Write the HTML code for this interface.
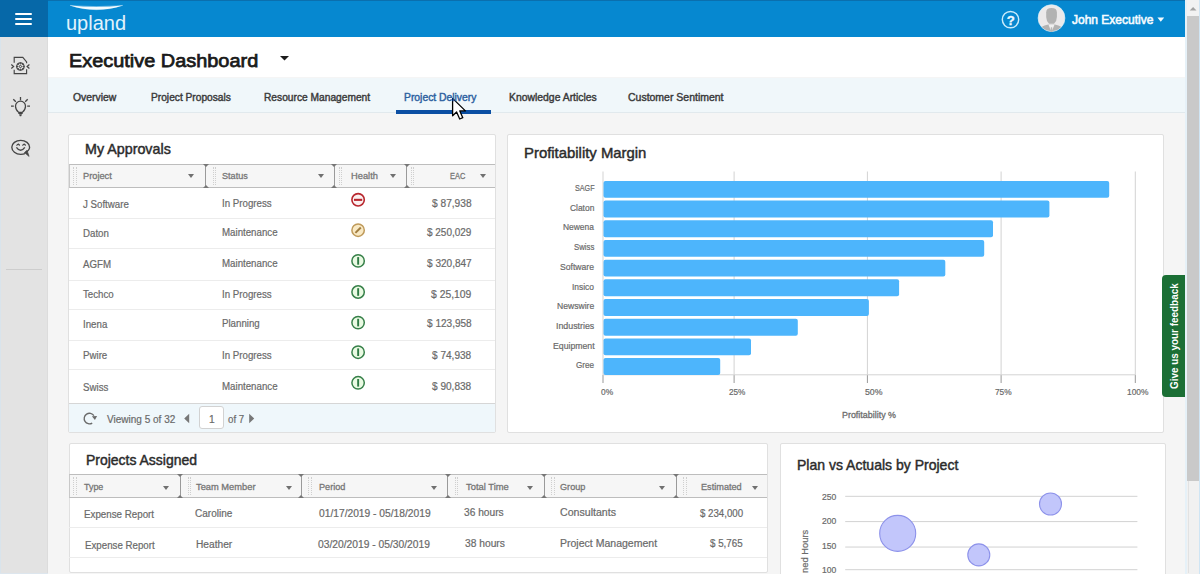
<!DOCTYPE html>
<html><head><meta charset="utf-8">
<style>
*{margin:0;padding:0;box-sizing:border-box}
html,body{width:1200px;height:574px;overflow:hidden;background:#f5f5f5;font-family:"Liberation Sans",sans-serif;color:#555;position:relative}
div{position:absolute}
.t{white-space:nowrap;line-height:1;transform-origin:0 0}
.card{background:#fff;border:1px solid #e0e0e0;border-radius:2px}
.th{background:#f6f6f6;border-top:1px solid #bdbdbd;border-bottom:1px solid #bdbdbd;border-left:1px solid #c8c8c8}
.sep{width:1px;background:#9a9a9a}
.sep:before,.sep:after{content:"";position:absolute;left:-2.5px;border-left:3px solid transparent;border-right:3px solid transparent}
.sep:before{top:0;border-top:3px solid #777}
.sep:after{bottom:0;border-bottom:3px solid #777}
.dh{width:3.6px;border-left:1px dotted #cfcfcf;border-right:1px dotted #cfcfcf}
.ar{width:0;height:0;border-left:3.8px solid transparent;border-right:3.8px solid transparent;border-top:4.4px solid #707070}
.rs{height:1px;background:#ececec}
</style></head><body>
<!-- header -->
<div style="left:0;top:0;width:1185px;height:37.8px;background:#0688d0"></div>
<div style="left:0;top:0;width:1185px;height:1px;background:#0a6fae"></div>
<div style="left:0;top:0;width:48px;height:37.8px;background:#0668a8"></div>
<div style="left:15px;top:13px;width:17px;height:2.3px;background:#fff;border-radius:1px"></div>
<div style="left:15px;top:17.8px;width:17px;height:2.3px;background:#fff;border-radius:1px"></div>
<div style="left:15px;top:22.6px;width:17px;height:2.3px;background:#fff;border-radius:1px"></div>
<svg style="position:absolute;left:0;top:0" width="1200" height="40">
 <path d="M70 5.4 Q96.4 7.9 122.8 5.4 Q96.4 14.1 70 5.4 Z" fill="#f2fafe" stroke="#f2fafe" stroke-width="0.25"/>
 <circle cx="1010.5" cy="19.6" r="8.2" fill="none" stroke="#c9ebfb" stroke-width="1.45"/>
 <text x="1010.7" y="24.7" font-family="Liberation Sans" font-size="13.2" font-weight="bold" fill="#eef9fe" text-anchor="middle" stroke="#eef9fe" stroke-width="0.3">?</text>
 <circle cx="1051.5" cy="18.1" r="13.4" fill="#ebe9ea" stroke="#d8f0fb" stroke-width="0.7"/>
 <clipPath id="av"><circle cx="1051.5" cy="18.1" r="13.1"/></clipPath>
 <g clip-path="url(#av)" fill="#b2b2b2">
  <path d="M1046.2 12.2 Q1046.2 7.9 1051.5 7.9 Q1056.9 7.9 1056.9 12.2 L1056.9 17 Q1056.9 21 1054 23.8 L1049.1 23.8 Q1046.2 21 1046.2 17 Z"/>
  <path d="M1039 35 L1042.3 26.6 Q1043.8 25.2 1048.3 24.4 L1054.7 24.4 Q1059.2 25.2 1060.7 26.6 L1064 35 Z"/>
 </g>
 <path d="M1048.4 24.6 L1051.5 32 L1054.6 24.6 Z" fill="#efefef"/>
 <path d="M1050.9 27.2 L1052.1 27.2 L1052.6 32 L1050.4 32 Z" fill="#b8b8b8"/>
 <path d="M1157.4 17.4 L1164.2 17.4 L1160.8 21.8 Z" fill="#f4fbff"/>
</svg>
<!-- sidebar -->
<div style="left:0;top:37px;width:48px;height:537px;background:#e3e3e3;border-right:1px solid #dcdcdc"></div>
<div style="left:6px;top:268.8px;width:36px;height:1px;background:#cdcdcd"></div>
<div style="left:0;top:37.8px;width:1px;height:537px;background:#d9e4ec"></div>
<div style="left:0;top:573px;width:48px;height:1px;background:#dde6ee"></div>
<svg style="position:absolute;left:0;top:37px" width="48" height="140" fill="none" stroke="#454545" stroke-width="1.15">
 <g transform="translate(0,0.3)">
 <path d="M14.2 25.5 L14.2 20 L22.8 20 L26.6 24.6 L26.6 26"/>
 <path d="M14.2 32.5 L14.2 36.3 L26.6 36.3 L26.6 32"/>
 <path d="M11.3 27.2 L13.6 29.2 L11.3 31.2 M29.4 27.2 L27.1 29.2 L29.4 31.2" stroke-width="1.2"/>
 <circle cx="20.4" cy="29.2" r="3.7" stroke-width="1.3"/>
 <circle cx="20.4" cy="29.2" r="1.1" stroke-width="1"/>
 <path d="M20.4 25.1 V27.1 M20.4 31.3 V33.3 M16.3 29.2 H18.3 M22.5 29.2 H24.5 M17.5 26.3 L18.9 27.7 M21.9 30.7 L23.3 32.1 M23.3 26.3 L21.9 27.7 M18.9 30.7 L17.5 32.1" stroke-width="0.9"/></g>
 <path d="M18.7 75.4 Q15.5 72.6 15.5 69.2 A5 5 0 0 1 25.5 69.2 Q25.5 72.6 22.3 75.4 Z" stroke-width="1.25"/>
 <path d="M18.3 76.4 H22.7 M19.2 77.9 H21.8 M20.5 77.5 V79.2" stroke-width="1.4"/>
 <path d="M20.5 60 V63.2 M13.3 62.2 L15.8 64.7 M27.7 62.2 L25.2 64.7 M11 69.2 H13.8 M27.2 69.2 H30" stroke-width="1.3"/>
 <path d="M25.6 115.6 Q29.6 113.2 29.6 110.3 A8.9 7 0 1 0 20.7 117.3 Q23.3 117.3 25 116.7" stroke-width="1.35"/>
 <path d="M24.4 115.6 L29.1 119.4 L27 113.4 Z" fill="#454545" stroke-width="0.7"/>
 <path d="M16.5 108.3 Q18.2 105.4 19.9 108.3 Q18.2 107.1 16.5 108.3 Z M22.4 108.3 Q24.1 105.4 25.8 108.3 Q24.1 107.1 22.4 108.3 Z" fill="#454545" stroke-width="0.8"/>
 <path d="M16.4 110.3 Q20.6 116.2 24.8 110.3" stroke-width="1.4"/>
</svg>
<!-- title bar + nav -->
<div style="left:48px;top:37px;width:1137px;height:40px;background:#fff"></div>
<div style="left:48px;top:77.6px;width:1137px;height:35.9px;background:#f0f7fa;border-bottom:1px solid #e1e9ed"></div>
<svg style="position:absolute;left:270px;top:50px" width="30" height="20"><path d="M10 6 L19 6 L14.5 10.4 Z" fill="#1c1c1c"/></svg>
<div style="left:395.7px;top:109.9px;width:95.7px;height:3.7px;background:#0c4fa3"></div>
<div class="card" style="left:68px;top:134px;width:428px;height:298.9px"></div>
<div class="th" style="left:69px;top:164px;width:426px;height:24px"></div>
<div class="sep" style="left:205.0px;top:164px;height:24px"></div>
<div class="sep" style="left:333.7px;top:164px;height:24px"></div>
<div class="sep" style="left:406.0px;top:164px;height:24px"></div>
<div class="dh" style="left:73.2px;top:167px;height:18px"></div>
<div class="dh" style="left:212.7px;top:167px;height:18px"></div>
<div class="dh" style="left:338.5px;top:167px;height:18px"></div>
<div class="dh" style="left:410.8px;top:167px;height:18px"></div>
<div class="ar" style="left:188.2px;top:174.3px"></div>
<div class="ar" style="left:317.5px;top:174.3px"></div>
<div class="ar" style="left:389.5px;top:174.3px"></div>
<div class="ar" style="left:479.9px;top:174.3px"></div>
<div class="rs" style="left:69px;top:217.9px;width:426px"></div>
<div class="rs" style="left:69px;top:247.5px;width:426px"></div>
<div class="rs" style="left:69px;top:280.4px;width:426px"></div>
<div class="rs" style="left:69px;top:308.5px;width:426px"></div>
<div class="rs" style="left:69px;top:339.7px;width:426px"></div>
<div class="rs" style="left:69px;top:368.9px;width:426px"></div>
<div style="left:69px;top:403px;width:426px;height:29.4px;background:#eff7fb;border-top:1px solid #d6d6d6"></div>
<div style="left:199.2px;top:406.3px;width:25px;height:23px;background:#fff;border:1px solid #d2d2d2;border-radius:3px"></div>
<svg style="position:absolute;left:0;top:0" width="1200" height="574">
<circle cx="358.1" cy="199.8" r="6.2" fill="#fbf0f0" stroke="#b8272e" stroke-width="1.6"/><rect x="354.0" y="198.8" width="8.2" height="2.1" fill="#b8272e"/>
<circle cx="358.1" cy="230.2" r="6.2" fill="#f9e9c4" stroke="#bf9a5a" stroke-width="1.5"/><path d="M355.40000000000003 232.89999999999998 L360.8 227.5" stroke="#a07d40" stroke-width="2"/>
<circle cx="358.1" cy="260.9" r="6.2" fill="#eafae3" stroke="#378049" stroke-width="1.5"/><rect x="357.20000000000005" y="257.09999999999997" width="1.9" height="7.6" fill="#2f7b45"/>
<circle cx="358.1" cy="292" r="6.2" fill="#eafae3" stroke="#378049" stroke-width="1.5"/><rect x="357.20000000000005" y="288.2" width="1.9" height="7.6" fill="#2f7b45"/>
<circle cx="358.1" cy="322.6" r="6.2" fill="#eafae3" stroke="#378049" stroke-width="1.5"/><rect x="357.20000000000005" y="318.8" width="1.9" height="7.6" fill="#2f7b45"/>
<circle cx="358.1" cy="352.2" r="6.2" fill="#eafae3" stroke="#378049" stroke-width="1.5"/><rect x="357.20000000000005" y="348.4" width="1.9" height="7.6" fill="#2f7b45"/>
<circle cx="358.1" cy="382.8" r="6.2" fill="#eafae3" stroke="#378049" stroke-width="1.5"/><rect x="357.20000000000005" y="379.0" width="1.9" height="7.6" fill="#2f7b45"/>
<path d="M92.2 423.1 A5.3 5.3 0 1 1 93.9 415.6" fill="none" stroke="#6a6a6a" stroke-width="1.35"/><path d="M91.9 416.3 L97.1 415.9 L94.9 420 Z" fill="#6a6a6a"/>
<path d="M189.2 413.8 L184.2 418.5 L189.2 423.3 Z" fill="#777"/><path d="M249.2 413.8 L254.2 418.5 L249.2 423.3 Z" fill="#777"/>
</svg>
<div class="card" style="left:506.9px;top:134px;width:657.1px;height:298.7px"></div>
<svg style="position:absolute;left:0;top:0" width="1200" height="574">
<rect x="602.5" y="171.5" width="1" height="203.5" fill="#d3d3d3"/>
<rect x="602.5" y="375" width="1" height="8" fill="#999"/>
<rect x="733.6" y="171.5" width="1" height="203.5" fill="#d3d3d3"/>
<rect x="733.6" y="375" width="1" height="8" fill="#999"/>
<rect x="866.9" y="171.5" width="1" height="203.5" fill="#d3d3d3"/>
<rect x="866.9" y="375" width="1" height="8" fill="#999"/>
<rect x="1000.6" y="171.5" width="1" height="203.5" fill="#d3d3d3"/>
<rect x="1000.6" y="375" width="1" height="8" fill="#999"/>
<rect x="1134.8" y="171.5" width="1" height="203.5" fill="#d3d3d3"/>
<rect x="1134.8" y="375" width="1" height="8" fill="#999"/>
<rect x="603" y="374.3" width="532.5" height="1" fill="#d3d3d3"/>
<rect x="603.5" y="180.90" width="505.7" height="16.9" rx="2" fill="#4db5fc"/>
<rect x="603.5" y="200.59" width="445.9" height="16.9" rx="2" fill="#4db5fc"/>
<rect x="603.5" y="220.28" width="389.5" height="16.9" rx="2" fill="#4db5fc"/>
<rect x="603.5" y="239.97" width="380.7" height="16.9" rx="2" fill="#4db5fc"/>
<rect x="603.5" y="259.66" width="341.8" height="16.9" rx="2" fill="#4db5fc"/>
<rect x="603.5" y="279.35" width="295.6" height="16.9" rx="2" fill="#4db5fc"/>
<rect x="603.5" y="299.04" width="265.4" height="16.9" rx="2" fill="#4db5fc"/>
<rect x="603.5" y="318.73" width="194.3" height="16.9" rx="2" fill="#4db5fc"/>
<rect x="603.5" y="338.42" width="147.5" height="16.9" rx="2" fill="#4db5fc"/>
<rect x="603.5" y="358.11" width="116.7" height="16.9" rx="2" fill="#4db5fc"/>
</svg>
<div class="card" style="left:68.5px;top:442.8px;width:699px;height:130.2px"></div>
<div class="th" style="left:69px;top:474px;width:698px;height:24px"></div>
<div class="sep" style="left:179.7px;top:474px;height:24px"></div>
<div class="sep" style="left:300.8px;top:474px;height:24px"></div>
<div class="sep" style="left:447.3px;top:474px;height:24px"></div>
<div class="sep" style="left:543.9px;top:474px;height:24px"></div>
<div class="sep" style="left:675.7px;top:474px;height:24px"></div>
<div class="dh" style="left:73.2px;top:477px;height:18px"></div>
<div class="dh" style="left:187.7px;top:477px;height:18px"></div>
<div class="dh" style="left:308.4px;top:477px;height:18px"></div>
<div class="dh" style="left:454.8px;top:477px;height:18px"></div>
<div class="dh" style="left:551.4px;top:477px;height:18px"></div>
<div class="dh" style="left:683.2px;top:477px;height:18px"></div>
<div class="ar" style="left:163.0px;top:485.5px"></div>
<div class="ar" style="left:285.5px;top:485.5px"></div>
<div class="ar" style="left:431.3px;top:485.5px"></div>
<div class="ar" style="left:526.6px;top:485.5px"></div>
<div class="ar" style="left:658.7px;top:485.5px"></div>
<div class="ar" style="left:752.0px;top:485.5px"></div>
<div class="rs" style="left:69px;top:526.5px;width:698px"></div>
<div class="rs" style="left:69px;top:557.0px;width:698px"></div>
<div class="card" style="left:779.8px;top:443px;width:386.5px;height:140px"></div>
<svg style="position:absolute;left:0;top:0" width="1200" height="574">
<rect x="845.2" y="495.8" width="292.2" height="1.1" fill="#d6d6d6"/>
<rect x="845.2" y="521.0" width="292.2" height="1.1" fill="#d6d6d6"/>
<rect x="845.2" y="546.5" width="292.2" height="1.1" fill="#d6d6d6"/>
<rect x="845.2" y="569.1" width="292.2" height="1.1" fill="#d6d6d6"/>
<circle cx="897.7" cy="533.4" r="18" fill="#c2c6fb" stroke="#8d92ea" stroke-width="1.1"/>
<circle cx="978.8" cy="554.9" r="11" fill="#c2c6fb" stroke="#8d92ea" stroke-width="1.1"/>
<circle cx="1050.5" cy="504" r="11" fill="#c2c6fb" stroke="#8d92ea" stroke-width="1.1"/>
<text transform="translate(808.3,574) rotate(-90)" x="1" y="0" font-family="Liberation Sans" font-size="9.4" fill="#6a6a6a" stroke="#6a6a6a" stroke-width="0.2">ned Hours</text>
</svg>
<div style="left:1161.6px;top:275.2px;width:23.6px;height:121.5px;background:#1b6f35;border-radius:4px 0 0 4px"></div>
<div class="t" style="left:1168.5px;top:388.5px;font-size:10.8px;font-weight:bold;color:#fff;transform:rotate(-90deg) scaleX(0.917)">Give us your feedback</div>
<div style="left:1185px;top:0;width:15px;height:574px;background:#f1f1f1"></div>
<div style="left:1185px;top:0;width:1.6px;height:574px;background:#e6f1f8"></div>
<div style="left:1186.6px;top:0;width:12.6px;height:15.7px;background:#f2f2f2"></div>
<svg style="position:absolute;left:1185px;top:0" width="15" height="16"><path d="M4.7 10.5 L11.5 10.5 L8.1 7 Z" fill="#a3a3a3"/></svg>
<div style="left:1186.6px;top:15.7px;width:12.6px;height:465.7px;background:#c9c9c9"></div>
<div style="left:1199.2px;top:0;width:0.8px;height:574px;background:#cfe5f4"></div>
<div style="left:1187.5px;top:481.4px;width:1px;height:92px;background:#e2e2e2"></div>
<svg style="position:absolute;left:450px;top:96px" width="22" height="28"><path d="M2.6 2.4 L2.6 19.8 L6.6 16 L9.7 23 L12.8 21.7 L9.8 14.9 L15.4 14.9 Z" fill="#fff" stroke="#000" stroke-width="1.3" stroke-linejoin="round"/></svg>
<div class="t" style="left:66.30px;top:13.76px;font-size:19.3px;font-weight:normal;color:#e2f3fc;transform:scaleX(1.0362);">upland</div>
<div class="t" style="left:1072.40px;top:14.22px;font-size:12.5px;font-weight:normal;color:#f4fbff;transform:scaleX(0.9601);-webkit-text-stroke:0.6px #f4fbff;">John Executive</div>
<div class="t" style="left:69.20px;top:52.00px;font-size:18.9px;font-weight:normal;color:#1a1a1a;transform:scaleX(1.0537);-webkit-text-stroke:0.75px #1a1a1a;">Executive Dashboard</div>
<div class="t" style="left:72.80px;top:92.94px;font-size:10px;font-weight:normal;color:#3a3a3a;transform:scaleX(1.0363);-webkit-text-stroke:0.4px #3a3a3a;">Overview</div>
<div class="t" style="left:151.20px;top:92.94px;font-size:10px;font-weight:normal;color:#3a3a3a;transform:scaleX(1.0195);-webkit-text-stroke:0.4px #3a3a3a;">Project Proposals</div>
<div class="t" style="left:263.70px;top:92.94px;font-size:10px;font-weight:normal;color:#3a3a3a;transform:scaleX(1.0207);-webkit-text-stroke:0.4px #3a3a3a;">Resource Management</div>
<div class="t" style="left:403.70px;top:92.94px;font-size:10px;font-weight:normal;color:#2c5f9f;transform:scaleX(1.0338);-webkit-text-stroke:0.4px #2c5f9f;">Project Delivery</div>
<div class="t" style="left:508.60px;top:92.94px;font-size:10px;font-weight:normal;color:#3a3a3a;transform:scaleX(1.0391);-webkit-text-stroke:0.4px #3a3a3a;">Knowledge Articles</div>
<div class="t" style="left:628.40px;top:92.94px;font-size:10px;font-weight:normal;color:#3a3a3a;transform:scaleX(1.0477);-webkit-text-stroke:0.4px #3a3a3a;">Customer Sentiment</div>
<div class="t" style="left:84.90px;top:142.11px;font-size:14.4px;font-weight:normal;color:#2b2b2b;transform:scaleX(0.9932);-webkit-text-stroke:0.45px #2b2b2b;">My Approvals</div>
<div class="t" style="left:83.00px;top:172.01px;font-size:9.2px;font-weight:normal;color:#777;transform:scaleX(1.0067);-webkit-text-stroke:0.3px #777;">Project</div>
<div class="t" style="left:222.00px;top:172.01px;font-size:9.2px;font-weight:normal;color:#777;transform:scaleX(0.9905);-webkit-text-stroke:0.3px #777;">Status</div>
<div class="t" style="left:351.00px;top:172.01px;font-size:9.2px;font-weight:normal;color:#777;transform:scaleX(1.0127);-webkit-text-stroke:0.3px #777;">Health</div>
<div class="t" style="left:450.40px;top:172.01px;font-size:9.2px;font-weight:normal;color:#777;transform:scaleX(0.8093);-webkit-text-stroke:0.3px #777;">EAC</div>
<div class="t" style="left:82.70px;top:200.03px;font-size:10px;font-weight:normal;color:#6a6a6a;transform:scaleX(0.9700);-webkit-text-stroke:0.2px #6a6a6a;">J Software</div>
<div class="t" style="left:222.40px;top:199.44px;font-size:10px;font-weight:normal;color:#6a6a6a;transform:scaleX(0.9700);-webkit-text-stroke:0.2px #6a6a6a;">In Progress</div>
<div class="t" style="left:431.60px;top:199.44px;font-size:10px;font-weight:normal;color:#6a6a6a;transform:scaleX(1.0170);-webkit-text-stroke:0.2px #6a6a6a;">$ 87,938</div>
<div class="t" style="left:82.70px;top:228.53px;font-size:10px;font-weight:normal;color:#6a6a6a;transform:scaleX(0.9700);-webkit-text-stroke:0.2px #6a6a6a;">Daton</div>
<div class="t" style="left:222.40px;top:227.94px;font-size:10px;font-weight:normal;color:#6a6a6a;transform:scaleX(0.9700);-webkit-text-stroke:0.2px #6a6a6a;">Maintenance</div>
<div class="t" style="left:426.80px;top:227.94px;font-size:10px;font-weight:normal;color:#6a6a6a;transform:scaleX(0.9978);-webkit-text-stroke:0.2px #6a6a6a;">$ 250,029</div>
<div class="t" style="left:82.70px;top:259.84px;font-size:10px;font-weight:normal;color:#6a6a6a;transform:scaleX(0.9700);-webkit-text-stroke:0.2px #6a6a6a;">AGFM</div>
<div class="t" style="left:222.40px;top:259.24px;font-size:10px;font-weight:normal;color:#6a6a6a;transform:scaleX(0.9700);-webkit-text-stroke:0.2px #6a6a6a;">Maintenance</div>
<div class="t" style="left:426.50px;top:259.24px;font-size:10px;font-weight:normal;color:#6a6a6a;transform:scaleX(1.0045);-webkit-text-stroke:0.2px #6a6a6a;">$ 320,847</div>
<div class="t" style="left:82.70px;top:290.14px;font-size:10px;font-weight:normal;color:#6a6a6a;transform:scaleX(0.9700);-webkit-text-stroke:0.2px #6a6a6a;">Techco</div>
<div class="t" style="left:222.40px;top:289.54px;font-size:10px;font-weight:normal;color:#6a6a6a;transform:scaleX(0.9700);-webkit-text-stroke:0.2px #6a6a6a;">In Progress</div>
<div class="t" style="left:430.90px;top:289.54px;font-size:10px;font-weight:normal;color:#6a6a6a;transform:scaleX(1.0350);-webkit-text-stroke:0.2px #6a6a6a;">$ 25,109</div>
<div class="t" style="left:82.70px;top:320.04px;font-size:10px;font-weight:normal;color:#6a6a6a;transform:scaleX(0.9700);-webkit-text-stroke:0.2px #6a6a6a;">Inena</div>
<div class="t" style="left:222.40px;top:319.44px;font-size:10px;font-weight:normal;color:#6a6a6a;transform:scaleX(0.9700);-webkit-text-stroke:0.2px #6a6a6a;">Planning</div>
<div class="t" style="left:426.50px;top:319.44px;font-size:10px;font-weight:normal;color:#6a6a6a;transform:scaleX(1.0045);-webkit-text-stroke:0.2px #6a6a6a;">$ 123,958</div>
<div class="t" style="left:82.70px;top:351.34px;font-size:10px;font-weight:normal;color:#6a6a6a;transform:scaleX(0.9700);-webkit-text-stroke:0.2px #6a6a6a;">Pwire</div>
<div class="t" style="left:222.40px;top:350.74px;font-size:10px;font-weight:normal;color:#6a6a6a;transform:scaleX(0.9700);-webkit-text-stroke:0.2px #6a6a6a;">In Progress</div>
<div class="t" style="left:432.00px;top:350.74px;font-size:10px;font-weight:normal;color:#6a6a6a;transform:scaleX(1.0067);-webkit-text-stroke:0.2px #6a6a6a;">$ 74,938</div>
<div class="t" style="left:82.70px;top:382.54px;font-size:10px;font-weight:normal;color:#6a6a6a;transform:scaleX(0.9700);-webkit-text-stroke:0.2px #6a6a6a;">Swiss</div>
<div class="t" style="left:222.40px;top:381.94px;font-size:10px;font-weight:normal;color:#6a6a6a;transform:scaleX(0.9700);-webkit-text-stroke:0.2px #6a6a6a;">Maintenance</div>
<div class="t" style="left:432.00px;top:381.94px;font-size:10px;font-weight:normal;color:#6a6a6a;transform:scaleX(1.0067);-webkit-text-stroke:0.2px #6a6a6a;">$ 90,838</div>
<div class="t" style="left:107.00px;top:413.53px;font-size:10.6px;font-weight:normal;color:#6a6a6a;transform:scaleX(0.9453);-webkit-text-stroke:0.2px #6a6a6a;">Viewing 5 of 32</div>
<div class="t" style="left:209.20px;top:413.53px;font-size:10.6px;font-weight:normal;color:#6a6a6a;transform:scaleX(0.9700);-webkit-text-stroke:0.2px #6a6a6a;">1</div>
<div class="t" style="left:228.00px;top:413.53px;font-size:10.6px;font-weight:normal;color:#6a6a6a;transform:scaleX(0.9167);-webkit-text-stroke:0.2px #6a6a6a;">of 7</div>
<div class="t" style="left:523.50px;top:145.00px;font-size:15px;font-weight:normal;color:#2b2b2b;transform:scaleX(0.9920);-webkit-text-stroke:0.45px #2b2b2b;">Profitability Margin</div>
<div class="t" style="left:574.60px;top:184.08px;font-size:9px;font-weight:normal;color:#6a6a6a;transform:scaleX(0.7995);-webkit-text-stroke:0.2px #6a6a6a;">SAGF</div>
<div class="t" style="left:569.90px;top:203.77px;font-size:9px;font-weight:normal;color:#6a6a6a;transform:scaleX(0.9341);-webkit-text-stroke:0.2px #6a6a6a;">Claton</div>
<div class="t" style="left:563.30px;top:223.46px;font-size:9px;font-weight:normal;color:#6a6a6a;transform:scaleX(0.9355);-webkit-text-stroke:0.2px #6a6a6a;">Newena</div>
<div class="t" style="left:573.80px;top:243.15px;font-size:9px;font-weight:normal;color:#6a6a6a;transform:scaleX(0.8675);-webkit-text-stroke:0.2px #6a6a6a;">Swiss</div>
<div class="t" style="left:560.20px;top:262.84px;font-size:9px;font-weight:normal;color:#6a6a6a;transform:scaleX(0.9569);-webkit-text-stroke:0.2px #6a6a6a;">Software</div>
<div class="t" style="left:572.20px;top:282.53px;font-size:9px;font-weight:normal;color:#6a6a6a;transform:scaleX(0.9355);-webkit-text-stroke:0.2px #6a6a6a;">Insico</div>
<div class="t" style="left:557.00px;top:302.22px;font-size:9px;font-weight:normal;color:#6a6a6a;transform:scaleX(0.9535);-webkit-text-stroke:0.2px #6a6a6a;">Newswire</div>
<div class="t" style="left:555.90px;top:321.91px;font-size:9px;font-weight:normal;color:#6a6a6a;transform:scaleX(0.9813);-webkit-text-stroke:0.2px #6a6a6a;">Industries</div>
<div class="t" style="left:552.60px;top:341.60px;font-size:9px;font-weight:normal;color:#6a6a6a;transform:scaleX(0.9667);-webkit-text-stroke:0.2px #6a6a6a;">Equipment</div>
<div class="t" style="left:576.10px;top:361.29px;font-size:9px;font-weight:normal;color:#6a6a6a;transform:scaleX(0.9043);-webkit-text-stroke:0.2px #6a6a6a;">Gree</div>
<div class="t" style="left:600.90px;top:387.88px;font-size:9px;font-weight:normal;color:#6a6a6a;transform:scaleX(0.9297);-webkit-text-stroke:0.2px #6a6a6a;">0%</div>
<div class="t" style="left:728.60px;top:387.88px;font-size:9px;font-weight:normal;color:#6a6a6a;transform:scaleX(0.9103);-webkit-text-stroke:0.2px #6a6a6a;">25%</div>
<div class="t" style="left:865.40px;top:387.88px;font-size:9px;font-weight:normal;color:#6a6a6a;transform:scaleX(0.9714);-webkit-text-stroke:0.2px #6a6a6a;">50%</div>
<div class="t" style="left:995.10px;top:387.88px;font-size:9px;font-weight:normal;color:#6a6a6a;transform:scaleX(0.9214);-webkit-text-stroke:0.2px #6a6a6a;">75%</div>
<div class="t" style="left:1126.80px;top:387.88px;font-size:9px;font-weight:normal;color:#6a6a6a;transform:scaleX(0.9335);-webkit-text-stroke:0.2px #6a6a6a;">100%</div>
<div class="t" style="left:841.60px;top:410.78px;font-size:9px;font-weight:normal;color:#6d6d6d;transform:scaleX(0.9903);-webkit-text-stroke:0.3px #6d6d6d;">Profitability %</div>
<div class="t" style="left:86.00px;top:453.48px;font-size:14.2px;font-weight:normal;color:#2b2b2b;transform:scaleX(0.9842);-webkit-text-stroke:0.45px #2b2b2b;">Projects Assigned</div>
<div class="t" style="left:83.70px;top:483.01px;font-size:9.2px;font-weight:normal;color:#777;transform:scaleX(0.9700);-webkit-text-stroke:0.3px #777;">Type</div>
<div class="t" style="left:196.30px;top:483.01px;font-size:9.2px;font-weight:normal;color:#777;transform:scaleX(1.0133);-webkit-text-stroke:0.3px #777;">Team Member</div>
<div class="t" style="left:318.80px;top:483.01px;font-size:9.2px;font-weight:normal;color:#777;transform:scaleX(0.9939);-webkit-text-stroke:0.3px #777;">Period</div>
<div class="t" style="left:465.70px;top:483.01px;font-size:9.2px;font-weight:normal;color:#777;transform:scaleX(1.0221);-webkit-text-stroke:0.3px #777;">Total Time</div>
<div class="t" style="left:560.40px;top:483.01px;font-size:9.2px;font-weight:normal;color:#777;transform:scaleX(0.9943);-webkit-text-stroke:0.3px #777;">Group</div>
<div class="t" style="left:701.00px;top:483.01px;font-size:9.2px;font-weight:normal;color:#777;transform:scaleX(0.9961);-webkit-text-stroke:0.3px #777;">Estimated</div>
<div class="t" style="left:83.70px;top:509.74px;font-size:10px;font-weight:normal;color:#6a6a6a;transform:scaleX(0.9774);-webkit-text-stroke:0.2px #6a6a6a;">Expense Report</div>
<div class="t" style="left:195.20px;top:508.74px;font-size:10px;font-weight:normal;color:#6a6a6a;transform:scaleX(1.0013);-webkit-text-stroke:0.2px #6a6a6a;">Caroline</div>
<div class="t" style="left:318.80px;top:508.74px;font-size:10px;font-weight:normal;color:#6a6a6a;transform:scaleX(1.0240);-webkit-text-stroke:0.2px #6a6a6a;">01/17/2019 - 05/18/2019</div>
<div class="t" style="left:463.90px;top:508.44px;font-size:10px;font-weight:normal;color:#6a6a6a;transform:scaleX(1.0200);-webkit-text-stroke:0.2px #6a6a6a;">36 hours</div>
<div class="t" style="left:560.40px;top:508.44px;font-size:10px;font-weight:normal;color:#6a6a6a;transform:scaleX(1.0604);-webkit-text-stroke:0.2px #6a6a6a;">Consultants</div>
<div class="t" style="left:85.30px;top:540.53px;font-size:10px;font-weight:normal;color:#6a6a6a;transform:scaleX(0.9719);-webkit-text-stroke:0.2px #6a6a6a;">Expense Report</div>
<div class="t" style="left:196.30px;top:539.53px;font-size:10px;font-weight:normal;color:#6a6a6a;transform:scaleX(1.0175);-webkit-text-stroke:0.2px #6a6a6a;">Heather</div>
<div class="t" style="left:317.70px;top:539.53px;font-size:10px;font-weight:normal;color:#6a6a6a;transform:scaleX(1.0268);-webkit-text-stroke:0.2px #6a6a6a;">03/20/2019 - 05/30/2019</div>
<div class="t" style="left:464.80px;top:539.24px;font-size:10px;font-weight:normal;color:#6a6a6a;transform:scaleX(1.0251);-webkit-text-stroke:0.2px #6a6a6a;">38 hours</div>
<div class="t" style="left:560.10px;top:539.24px;font-size:10px;font-weight:normal;color:#6a6a6a;transform:scaleX(1.0522);-webkit-text-stroke:0.2px #6a6a6a;">Project Management</div>
<div class="t" style="left:699.50px;top:508.74px;font-size:10px;font-weight:normal;color:#6a6a6a;transform:scaleX(0.9685);-webkit-text-stroke:0.2px #6a6a6a;">$ 234,000</div>
<div class="t" style="left:709.70px;top:539.13px;font-size:10px;font-weight:normal;color:#6a6a6a;transform:scaleX(0.9768);-webkit-text-stroke:0.2px #6a6a6a;">$ 5,765</div>
<div class="t" style="left:796.90px;top:458.03px;font-size:14.5px;font-weight:normal;color:#2b2b2b;transform:scaleX(0.9669);-webkit-text-stroke:0.45px #2b2b2b;">Plan vs Actuals by Project</div>
<div class="t" style="left:822.00px;top:492.62px;font-size:8.6px;font-weight:normal;color:#6a6a6a;transform:scaleX(0.9969);-webkit-text-stroke:0.2px #6a6a6a;">250</div>
<div class="t" style="left:822.00px;top:517.42px;font-size:8.6px;font-weight:normal;color:#6a6a6a;transform:scaleX(0.9969);-webkit-text-stroke:0.2px #6a6a6a;">200</div>
<div class="t" style="left:822.00px;top:542.12px;font-size:8.6px;font-weight:normal;color:#6a6a6a;transform:scaleX(0.9969);-webkit-text-stroke:0.2px #6a6a6a;">150</div>
<div class="t" style="left:822.00px;top:566.12px;font-size:8.6px;font-weight:normal;color:#6a6a6a;transform:scaleX(0.9969);-webkit-text-stroke:0.2px #6a6a6a;">100</div>
</body></html>
